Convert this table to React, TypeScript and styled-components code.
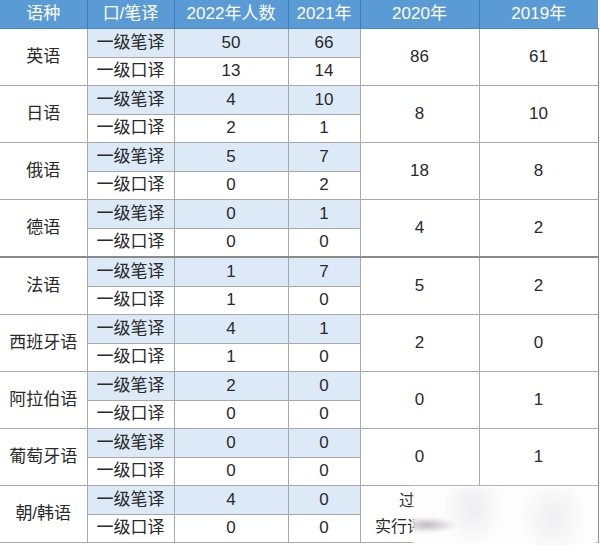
import React from 'react'
import styled, { createGlobalStyle } from 'styled-components'

const GlobalStyle = createGlobalStyle`
  html, body {
    margin: 0;
    padding: 0;
    background: #fff;
  }
  body {
    font-family: "Liberation Sans", "Noto Sans CJK SC", sans-serif;
  }
`

const Page = styled.div`
  position: relative;
  width: 600px;
  height: 545px;
  overflow: hidden;
`

const Table = styled.table`
  border-collapse: collapse;
  table-layout: fixed;
  width: 598px;
  font-size: 17px;
  color: #2a2a2a;
`

const HeadCell = styled.th`
  height: 28px;
  padding: 0;
  background: #5b9bd5;
  color: #fff;
  font-weight: normal;
  text-align: center;
  line-height: 20px;
  border-left: 1px solid #3f7fbf;
  border-bottom: 1px solid #4a85bd;
  &:first-child {
    border-left: none;
  }
`

const Cell = styled.td<{ $shade?: boolean; $groupTop?: boolean; $heavy?: boolean }>`
  height: 27.5px;
  padding: 0;
  text-align: center;
  vertical-align: middle;
  line-height: 20px;
  background: ${(p) => (p.$shade ? '#dce9f6' : '#fff')};
  border: 1px solid #a8a8a8;
  border-top: ${(p) =>
    p.$groupTop ? (p.$heavy ? '2px solid #8a8a8a' : '1px solid #8c8c8c') : '1px solid #a8a8a8'};
  &:first-child {
    border-left: none;
  }
  &:last-child {
    border-right: 1px solid #8c8c8c;
  }
`

const NoteCell = styled(Cell)`
  line-height: 26px;
  font-size: 16px;
  white-space: nowrap;
  overflow: hidden;
`

const Watermark = styled.div`
  position: absolute;
  left: 413px;
  top: 487px;
  width: 183px;
  height: 60px;
  background:
    radial-gradient(ellipse 30px 8px at 14px 38px, rgba(110, 95, 115, 0.45), rgba(110, 95, 115, 0) 100%),
    radial-gradient(ellipse 30px 40px at 60px 20px, rgba(235, 235, 238, 0.9), rgba(255, 255, 255, 0) 100%),
    radial-gradient(ellipse 35px 40px at 140px 30px, rgba(238, 238, 240, 0.9), rgba(255, 255, 255, 0) 100%),
    #fdfdfd;
  filter: blur(1.5px);
`

type Group = {
  lang: string
  y2022: [string, string]
  y2021: [string, string]
  y2020?: string
  y2019?: string
}

const groups: Group[] = [
  { lang: '英语', y2022: ['50', '13'], y2021: ['66', '14'], y2020: '86', y2019: '61' },
  { lang: '日语', y2022: ['4', '2'], y2021: ['10', '1'], y2020: '8', y2019: '10' },
  { lang: '俄语', y2022: ['5', '0'], y2021: ['7', '2'], y2020: '18', y2019: '8' },
  { lang: '德语', y2022: ['0', '0'], y2021: ['1', '0'], y2020: '4', y2019: '2' },
  { lang: '法语', y2022: ['1', '1'], y2021: ['7', '0'], y2020: '5', y2019: '2' },
  { lang: '西班牙语', y2022: ['4', '1'], y2021: ['1', '0'], y2020: '2', y2019: '0' },
  { lang: '阿拉伯语', y2022: ['2', '0'], y2021: ['0', '0'], y2020: '0', y2019: '1' },
  { lang: '葡萄牙语', y2022: ['0', '0'], y2021: ['0', '0'], y2020: '0', y2019: '1' },
  { lang: '朝/韩语', y2022: ['4', '0'], y2021: ['0', '0'] },
]

const App = () => {
  return (
    <Page>
      <GlobalStyle />
      <Table>
        <colgroup>
          <col style={{ width: 87 }} />
          <col style={{ width: 87 }} />
          <col style={{ width: 114 }} />
          <col style={{ width: 72 }} />
          <col style={{ width: 119 }} />
          <col style={{ width: 119 }} />
        </colgroup>
        <thead>
          <tr>
            <HeadCell>语种</HeadCell>
            <HeadCell>口/笔译</HeadCell>
            <HeadCell>2022年人数</HeadCell>
            <HeadCell>2021年</HeadCell>
            <HeadCell>2020年</HeadCell>
            <HeadCell>2019年</HeadCell>
          </tr>
        </thead>
        <tbody>
          {groups.map((g, i) => {
            const heavy = g.lang === '法语'
            return (
              <React.Fragment key={g.lang}>
                <tr>
                  <Cell rowSpan={2} $groupTop={i > 0} $heavy={heavy}>
                    {g.lang}
                  </Cell>
                  <Cell $shade $groupTop={i > 0} $heavy={heavy}>一级笔译</Cell>
                  <Cell $shade $groupTop={i > 0} $heavy={heavy}>{g.y2022[0]}</Cell>
                  <Cell $shade $groupTop={i > 0} $heavy={heavy}>{g.y2021[0]}</Cell>
                  {g.y2020 !== undefined ? (
                    <>
                      <Cell rowSpan={2} $groupTop={i > 0} $heavy={heavy}>{g.y2020}</Cell>
                      <Cell rowSpan={2} $groupTop={i > 0} $heavy={heavy}>{g.y2019}</Cell>
                    </>
                  ) : (
                    <NoteCell rowSpan={2} colSpan={2} $groupTop>
                      过渡期间，两年度均未
                      <br />
                      实行评价，故无考试统计数据
                    </NoteCell>
                  )}
                </tr>
                <tr>
                  <Cell>一级口译</Cell>
                  <Cell>{g.y2022[1]}</Cell>
                  <Cell>{g.y2021[1]}</Cell>
                </tr>
              </React.Fragment>
            )
          })}
        </tbody>
      </Table>
      <Watermark />
    </Page>
  )
}

export default App
